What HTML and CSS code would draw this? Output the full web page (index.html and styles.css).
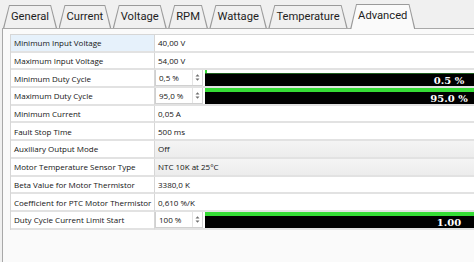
FILE: index.html
```html
<!DOCTYPE html>
<html>
<head>
<meta charset="utf-8">
<link rel="stylesheet" href="styles.css">
</head>
<body>
<div class="tabbar">
  <div class="tab">General</div>
  <div class="tab">Current</div>
  <div class="tab">Voltage</div>
  <div class="tab">RPM</div>
  <div class="tab">Wattage</div>
  <div class="tab">Temperature</div>
  <div class="tab active">Advanced</div>
</div>
<div class="pane">
  <div class="grid">
    <div class="label selected">Minimum Input Voltage</div>
    <div class="value">40,00 V</div>

    <div class="label">Maximum Input Voltage</div>
    <div class="value">54,00 V</div>

    <div class="label">Minimum Duty Cycle</div>
    <div class="value spinrow">
      <div class="spin"><span class="spintext">0,5 %</span><span class="arrows"><svg width="5" height="9" viewBox="0 0 5 9"><path d="M0.5 3.5 L2.5 1.2 L4.5 3.5Z M0.5 5.5 L2.5 7.8 L4.5 5.5Z" fill="#6e6e6e"/></svg></span></div>
      <div class="bar"><div class="track thin"><div class="fill" style="width:0.5%"></div></div><div class="barbody">0.5 %</div></div>
    </div>

    <div class="label">Maximum Duty Cycle</div>
    <div class="value spinrow">
      <div class="spin"><span class="spintext">95,0 %</span><span class="arrows"><svg width="5" height="9" viewBox="0 0 5 9"><path d="M0.5 3.5 L2.5 1.2 L4.5 3.5Z M0.5 5.5 L2.5 7.8 L4.5 5.5Z" fill="#6e6e6e"/></svg></span></div>
      <div class="bar"><div class="track"><div class="fill" style="width:95%"></div></div><div class="barbody">95.0 %</div></div>
    </div>

    <div class="label">Minimum Current</div>
    <div class="value">0,05 A</div>

    <div class="label">Fault Stop Time</div>
    <div class="value">500 ms</div>

    <div class="label">Auxiliary Output Mode</div>
    <div class="value combo">Off</div>

    <div class="label">Motor Temperature Sensor Type</div>
    <div class="value combo">NTC 10K at 25°C</div>

    <div class="label">Beta Value for Motor Thermistor</div>
    <div class="value">3380,0 K</div>

    <div class="label">Coefficient for PTC Motor Thermistor</div>
    <div class="value">0,610 %/K</div>

    <div class="label">Duty Cycle Current Limit Start</div>
    <div class="value spinrow">
      <div class="spin"><span class="spintext">100 %</span><span class="arrows"><svg width="5" height="9" viewBox="0 0 5 9"><path d="M0.5 3.5 L2.5 1.2 L4.5 3.5Z M0.5 5.5 L2.5 7.8 L4.5 5.5Z" fill="#6e6e6e"/></svg></span></div>
      <div class="bar"><div class="track"><div class="fill" style="width:100%"></div></div><div class="barbody">1.00</div></div>
    </div>
  </div>
</div>
</body>
</html>
```

FILE: styles.css
```css
html, body {
  margin: 0;
  padding: 0;
}
body {
  width: 474px;
  height: 262px;
  overflow: hidden;
  background: #f0f0f0;
  font-family: "Open Sans", "Noto Sans", sans-serif;
  color: #111;
}
.tabbar {
  display: flex;
  align-items: flex-end;
  gap: 1.5px;
  padding: 5px 0 0 3px;
  height: 23px;
  position: relative;
  z-index: 2;
}
.tab {
  position: relative;
  height: 23px;
  padding: 0 8px 0 8px;
  display: flex;
  align-items: center;
  font-family: Roboto, "Noto Sans", sans-serif;
  font-size: 11.2px;
  color: #1e1e1e;
  box-sizing: border-box;
}
.tab::before,
.tab::after {
  content: "";
  position: absolute;
  inset: 0;
  z-index: -1;
}
.tab::before {
  background: #9a9a9a;
  clip-path: polygon(0 100%, 6px 0, calc(100% - 6px) 0, 100% 100%);
}
.tab::after {
  background: #f0f0f0;
  clip-path: polygon(1.3px 100%, 6.7px 1px, calc(100% - 6.7px) 1px, calc(100% - 1.3px) 100%);
}
.tab.active {
  height: 25px;
  margin-bottom: -1px;
  padding-bottom: 2px;
  margin-left: 1px;
}
.tab.active::after {
  background: #fafafa;
}
.pane {
  margin-left: 2px;
  border-top: 1px solid #a8a8a8;
  border-left: 1px solid #a8a8a8;
  background: #fafafa;
  height: 240px;
  padding: 5px 0 0 7px;
  box-sizing: border-box;
}
.grid {
  display: grid;
  grid-template-columns: 144px 538px;
  grid-auto-rows: 17.7px;
  border-top: 1px solid #d6d6d6;
  border-left: 1px solid #d6d6d6;
  width: 683px;
  font-size: 8px;
}
.label,
.value {
  box-sizing: border-box;
  display: flex;
  align-items: center;
  border-bottom: 2px solid #e2e2e2;
  background: #fff;
  white-space: nowrap;
}
.label {
  padding-left: 3px;
  border-right: 1px solid #d6d6d6;
  color: #141414;
}
.label.selected {
  background: #e6f1fb;
}
.value {
  padding-left: 3px;
  color: #141414;
}
.value.combo {
  background: linear-gradient(#f4f4f4, #ececec);
}
.value.spinrow {
  padding-left: 0;
  align-items: stretch;
}
.spin {
  width: 48px;
  display: flex;
  align-items: center;
  border: 1px solid #d0d0d0;
  border-top: none;
  background: #fff;
  box-sizing: border-box;
}
.spintext {
  flex: 1;
  padding-left: 3px;
}
.arrows {
  width: 9px;
  display: flex;
  justify-content: center;
  align-items: center;
  border-left: 1px solid #e4e4e4;
  height: 100%;
}
.bar {
  flex: 1;
  margin-left: 2px;
  display: flex;
  flex-direction: column;
}
.track {
  height: 4px;
  background: #1d6a1d;
}
.track.thin {
  height: 5px;
  background: transparent;
  border-bottom: 1px solid #1f5f1f;
}
.fill {
  height: 100%;
  background: #35dc35;
}
.barbody {
  flex: 1;
  background: #000;
  color: #fff;
  font-family: "DejaVu Serif", "Liberation Serif", serif;
  font-weight: bold;
  font-size: 10px;
  display: flex;
  align-items: center;
  justify-content: center;
  padding-top: 1px;
}
```
